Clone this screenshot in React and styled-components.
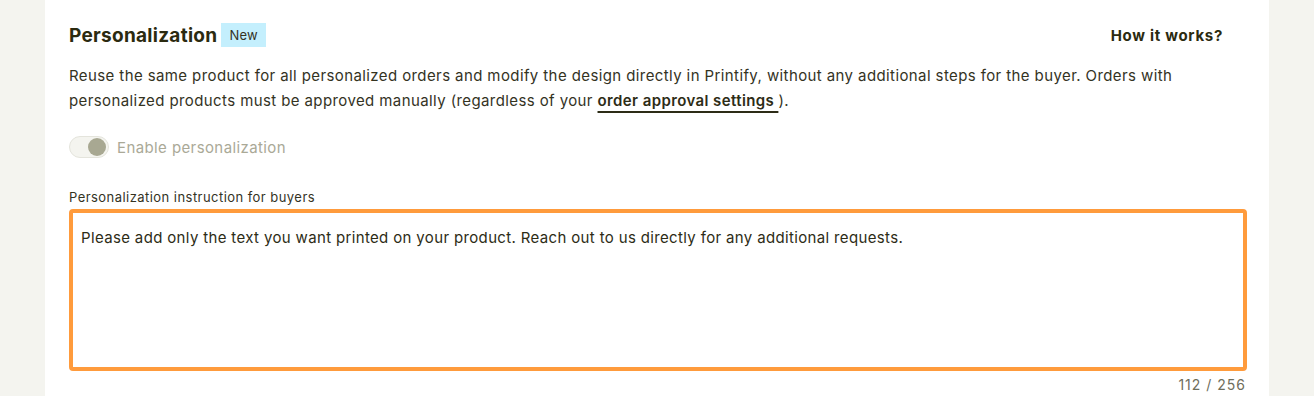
import React from 'react';
import styled, { createGlobalStyle } from 'styled-components';

const GlobalStyle = createGlobalStyle`
  html, body {
    margin: 0;
    padding: 0;
    background: #f4f4ef;
  }
  body {
    font-family: Inter, 'Liberation Sans', sans-serif;
    color: #2d2c16;
  }
`;

const Page = styled.div`
  padding-left: 45px;
  padding-right: 45px;
  height: 396px;
  overflow: hidden;
`;

const Card = styled.section`
  background: #fff;
  padding: 19px 22px 0 24px;
  height: 100%;
  box-sizing: border-box;
`;

const Header = styled.div`
  display: flex;
  align-items: center;
  justify-content: space-between;
  height: 32px;
`;

const TitleWrap = styled.div`
  display: flex;
  align-items: center;
  gap: 4px;
`;

const Title = styled.h2`
  margin: 0;
  font-size: 19px;
  font-weight: 700;
  letter-spacing: 0.28px;
  color: #2b2a10;
`;

const Badge = styled.span`
  background: #c4effd;
  font-size: 13px;
  letter-spacing: 0.3px;
  padding: 4px 8px;
  line-height: 16px;
  color: #34331f;
`;

const LinkButton = styled.a`
  font-size: 15px;
  font-weight: 700;
  letter-spacing: 0.7px;
  margin-right: 24px;
  cursor: pointer;
  color: #2b2a10;
`;

const Description = styled.p`
  margin: 12px 0 0;
  font-size: 15px;
  letter-spacing: 0.4px;
  line-height: 25px;
  color: #34331f;
`;

const Underlined = styled.a`
  font-weight: 600;
  color: #2d2c16;
  text-decoration: underline;
  text-decoration-thickness: 1.5px;
  text-underline-offset: 5px;
`;

const ToggleRow = styled.label`
  display: flex;
  align-items: center;
  gap: 8px;
  margin-top: 23px;
  color: #aaa997;
  font-size: 15px;
  letter-spacing: 0.4px;
`;

const Track = styled.span`
  width: 34px;
  height: 20px;
  border-radius: 11px;
  background: #f4f4ef;
  border: 1px solid #e4e4dc;
  display: flex;
  align-items: center;
  justify-content: flex-end;
  padding: 0 2px;
  box-sizing: content-box;
`;

const Knob = styled.span`
  width: 18px;
  height: 18px;
  border-radius: 50%;
  background: #a8a892;
`;

const FieldLabel = styled.div`
  margin-top: 31px;
  font-size: 13px;
  letter-spacing: 0.45px;
  line-height: 16px;
  color: #34331f;
`;

const TextArea = styled.textarea`
  display: block;
  margin-top: 4px;
  width: 100%;
  height: 162px;
  box-sizing: border-box;
  border: 4px solid #ff9b3c;
  border-radius: 4px;
  padding: 14px 8px;
  font-family: inherit;
  font-size: 15px;
  letter-spacing: 0.35px;
  line-height: 22px;
  color: #2d2c16;
  resize: none;
  outline: none;
`;

const Counter = styled.div`
  text-align: right;
  font-size: 14px;
  letter-spacing: 1px;
  color: #6f6e5c;
  margin-top: 5px;
  padding-right: 1px;
`;

export default function App() {
  return (
    <>
      <GlobalStyle />
      <Page>
        <Card>
          <Header>
            <TitleWrap>
              <Title>Personalization</Title>
              <Badge>New</Badge>
            </TitleWrap>
            <LinkButton>How it works?</LinkButton>
          </Header>
          <Description>
            Reuse the same product for all personalized orders and modify the design directly in Printify, without any additional steps for the buyer. Orders with personalized products must be approved manually (regardless of your <Underlined>order approval settings </Underlined>).
          </Description>
          <ToggleRow>
            <Track><Knob /></Track>
            Enable personalization
          </ToggleRow>
          <FieldLabel>Personalization instruction for buyers</FieldLabel>
          <TextArea
            readOnly
            value="Please add only the text you want printed on your product. Reach out to us directly for any additional requests."
          />
          <Counter>112 / 256</Counter>
        </Card>
      </Page>
    </>
  );
}
